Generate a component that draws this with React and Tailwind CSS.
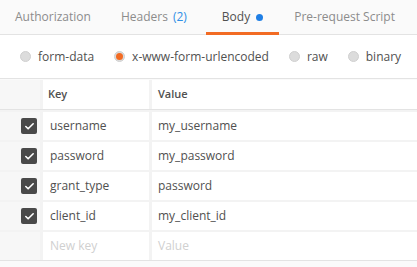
import { Check } from "lucide-react";

const tabs = [
  { label: "Authorization", cls: "px-[15px]" },
  { label: "Headers", count: "(2)", cls: "pl-[15px] pr-[19px]" },
  { label: "Body", active: true, cls: "pl-[16px] pr-[16px]" },
  { label: "Pre-request Script", cls: "px-[15px]" },
];

const radios = [
  { label: "form-data" },
  { label: "x-www-form-urlencoded", checked: true },
  { label: "raw" },
  { label: "binary" },
];

const rows = [
  { key: "username", value: "my_username" },
  { key: "password", value: "my_password" },
  { key: "grant_type", value: "password" },
  { key: "client_id", value: "my_client_id" },
];

export default function App() {
  return (
    <div
      className="w-[417px] h-[267px] overflow-hidden bg-[#fafafa] text-[#505050] whitespace-nowrap"
      style={{ fontFamily: '"Open Sans", "Noto Sans", sans-serif' }}
    >
      {/* tabs */}
      <div className="flex h-[35px] border-b border-[#e3e3e3]">
        {tabs.map((t) => (
          <div
            key={t.label}
            className={
              "relative shrink-0 flex items-center text-[12px] " +
              t.cls +
              (t.active ? " text-[#505050]" : " text-[#8c8c8c]")
            }
          >
            <span>{t.label}</span>
            {t.count && <span className="ml-[5px] text-[#2f8fe6]">{t.count}</span>}
            {t.active && <span className="ml-[6px] w-[7px] h-[7px] rounded-full bg-[#1f7fe5]" />}
            {t.active && <span className="absolute left-0 right-0 bottom-[-1px] h-[3px] bg-[#f26b23]" />}
          </div>
        ))}
      </div>

      {/* body type */}
      <div className="flex items-center h-[44px] pl-[20px] gap-[20px] border-b border-[#e3e3e3] bg-white text-[12px]">
        {radios.map((r) => (
          <div key={r.label} className="shrink-0 flex items-center gap-[7px]">
            <span className="w-[11px] h-[11px] rounded-full bg-[#dcdcdc] border border-[#d0d0d0] flex items-center justify-center">
              {r.checked && <span className="w-[7px] h-[7px] rounded-full bg-[#f26b23]" />}
            </span>
            <span className="text-[#505050]">{r.label}</span>
          </div>
        ))}
      </div>

      {/* table */}
      <div className="mt-[1px] flex flex-col gap-[2px] bg-[#f3f3f3]">
        <div className="flex h-[30px] border-b border-[#e3e3e3] gap-[3px]">
          <div className="w-[40px] bg-[#f7f7f7]" />
          <div className="w-[106px] bg-white flex items-center pl-[5px] text-[11px] font-semibold text-[#505050]">Key</div>
          <div className="flex-1 bg-white flex items-center pl-[6px] text-[11px] font-semibold text-[#505050]">Value</div>
        </div>
        {rows.map((r) => (
          <div key={r.key} className="flex h-[28px] gap-[3px]">
            <div className="w-[40px] bg-[#f7f7f7] flex items-center justify-end pr-[3px]">
              <span className="w-[16px] h-[16px] rounded-[2px] bg-[#4a4a4a] flex items-center justify-center">
                <Check size={11} strokeWidth={3.5} className="text-white" />
              </span>
            </div>
            <div className="w-[106px] bg-white flex items-center pl-[7px] text-[12px]">{r.key}</div>
            <div className="flex-1 bg-white flex items-center pl-[6px] text-[12px]">{r.value}</div>
          </div>
        ))}
        <div className="flex h-[29px] gap-[3px] border-b border-[#e3e3e3]">
          <div className="w-[40px] bg-[#f7f7f7]" />
          <div className="w-[106px] bg-white flex items-center pl-[7px] text-[12px] text-[#d0d0d0]">New key</div>
          <div className="flex-1 bg-white flex items-center pl-[6px] text-[12px] text-[#d0d0d0]">Value</div>
        </div>
      </div>
    </div>
  );
}
